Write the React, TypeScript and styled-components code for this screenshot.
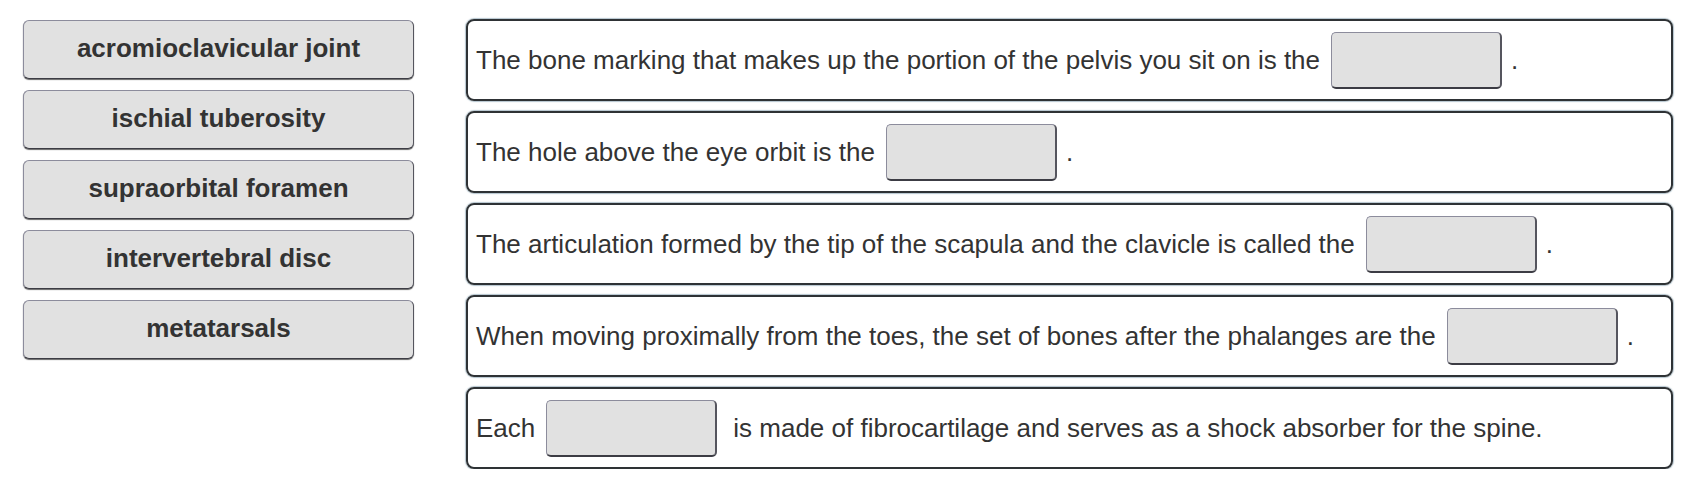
import React from "react";
import styled, { createGlobalStyle } from "styled-components";

const Global = createGlobalStyle`
  html, body { margin: 0; padding: 0; background: #ffffff; }
  body { font-family: "Liberation Sans", Arial, Helvetica, sans-serif; color: #333333; }
`;

const Page = styled.div`
  display: grid;
  grid-template-columns: 391px 1207px;
  column-gap: 52px;
  padding: 19px 0 0 23px;
  align-items: start;
`;

const LabelList = styled.div`
  display: flex;
  flex-direction: column;
  gap: 11px;
  padding-top: 1px;
`;

const Label = styled.div`
  box-sizing: border-box;
  height: 59px;
  display: flex;
  align-items: center;
  justify-content: center;
  background: #e1e1e1;
  border: 1px solid #8c8c9c;
  border-bottom-color: #3c3c44;
  border-right-color: #55555e;
  border-radius: 6px;
  box-shadow: 0 1px 1px rgba(0, 0, 0, 0.6);
  font-weight: 700;
  font-size: 26px;
  color: #333333;
  padding-bottom: 2px;
`;

const QuestionList = styled.div`
  display: flex;
  flex-direction: column;
  gap: 10px;
`;

const Question = styled.div`
  box-sizing: border-box;
  height: 82px;
  display: flex;
  align-items: center;
  border: 2px solid #2e3235;
  border-radius: 8px;
  box-shadow: 0 0 1px 1px rgba(120, 150, 165, 0.55);
  padding: 0 0 0 8px;
  font-size: 26px;
  color: #333333;
  white-space: pre;
`;

const Blank = styled.span<{ $after?: number }>`
  box-sizing: border-box;
  display: inline-block;
  width: 171px;
  height: 57px;
  margin: 0 ${(p) => p.$after ?? 9}px 0 11px;
  background: #e1e1e1;
  border: 1px solid #8c8c9c;
  border-bottom: 2px solid #3c3c44;
  border-right: 2px solid #55555e;
  border-radius: 5px;
  flex-shrink: 0;
`;

const Txt = styled.span``;

const labels = [
  "acromioclavicular joint",
  "ischial tuberosity",
  "supraorbital foramen",
  "intervertebral disc",
  "metatarsals",
];

const questions: { before: string; after: string; gap?: number }[] = [
  { before: "The bone marking that makes up the portion of the pelvis you sit on is the", after: "." },
  { before: "The hole above the eye orbit is the", after: "." },
  { before: "The articulation formed by the tip of the scapula and the clavicle is called the", after: "." },
  { before: "When moving proximally from the toes, the set of bones after the phalanges are the", after: "." },
  { before: "Each", after: "is made of fibrocartilage and serves as a shock absorber for the spine.", gap: 16 },
];

export default function App() {
  return (
    <>
      <Global />
      <Page>
        <LabelList>
          {labels.map((l) => (
            <Label key={l}>{l}</Label>
          ))}
        </LabelList>
        <QuestionList>
          {questions.map((q, i) => (
            <Question key={i}>
              <Txt>{q.before}</Txt>
              <Blank $after={q.gap} />
              <Txt>{q.after}</Txt>
            </Question>
          ))}
        </QuestionList>
      </Page>
    </>
  );
}
